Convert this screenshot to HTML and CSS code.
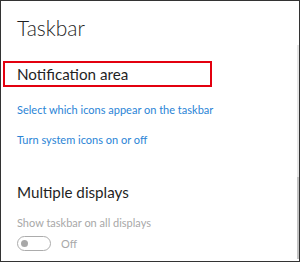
FILE: index.html
```html
<!DOCTYPE html>
<html lang="en">
<head>
    <meta charset="UTF-8">
    <meta name="viewport" content="width=device-width, initial-scale=1.0">
    <title>Taskbar</title>
    <link rel="stylesheet" href="styles.css">
</head>
<body>
    <div class="window">
        <div class="page">
            <h1 class="page-title">Taskbar</h1>

            <div class="section highlight">
                <h2 class="section-title">Notification area</h2>
            </div>
            <div class="links">
                <a class="link" href="#">Select which icons appear on the taskbar</a>
                <a class="link" href="#">Turn system icons on or off</a>
            </div>

            <h2 class="section-title multi">Multiple displays</h2>
            <div class="setting-label">Show taskbar on all displays</div>
            <div class="toggle-row">
                <span class="toggle"><span class="knob"></span></span>
                <span class="toggle-text">Off</span>
            </div>
        </div>
        <div class="scrollbar">
            <div class="thumb"></div>
        </div>
    </div>
</body>
</html>
```

FILE: styles.css
```css
html, body {
    margin: 0;
    padding: 0;
    background: #fff;
}
body {
    font-family: 'Lato', 'Noto Sans', sans-serif;
    color: #1f1f1f;
}
.window {
    box-sizing: border-box;
    width: 300px;
    height: 262px;
    border: 1px solid #333;
    display: flex;
    overflow: hidden;
}
.page {
    flex-grow: 1;
    padding: 12px 0 0 2px;
}
.page-title {
    margin: 0 0 0 14px;
    font-size: 21px;
    font-weight: 300;
    line-height: 30px;
    color: #1f1f1f;
}
.highlight {
    width: 205px;
    height: 22px;
    margin-top: 18px;
    border: 2px solid #e3000f;
    display: flex;
    align-items: center;
}
.section-title {
    margin: 0 0 0 12px;
    font-size: 15.2px;
    font-weight: 400;
    line-height: 20px;
    color: #1f1f1f;
}
.links {
    display: flex;
    flex-direction: column;
    gap: 13px;
    margin: 14px 0 0 14px;
}
.link {
    font-size: 11px;
    line-height: 17px;
    color: #2a84d6;
    text-decoration: none;
}
.multi {
    margin: 34px 0 0 14px;
}
.setting-label {
    margin: 13px 0 0 14px;
    font-size: 11px;
    line-height: 16px;
    color: #a8a8a8;
}
.toggle-row {
    display: flex;
    align-items: center;
    gap: 10px;
    margin: 5px 0 0 14px;
}
.toggle {
    box-sizing: border-box;
    width: 34px;
    height: 15px;
    border: 1.5px solid #acacac;
    border-radius: 8px;
    display: flex;
    align-items: center;
    padding-left: 3px;
}
.knob {
    width: 7px;
    height: 7px;
    border-radius: 50%;
    background: #a8a8a8;
}
.toggle-text {
    font-size: 11px;
    color: #a8a8a8;
}
.scrollbar {
    width: 2px;
    margin: 44px 0 2px 0;
    background: #e6e6e6;
    display: flex;
    flex-direction: column;
    justify-content: flex-end;
}
.thumb {
    height: 82px;
    background: #c4c4c4;
}
```
